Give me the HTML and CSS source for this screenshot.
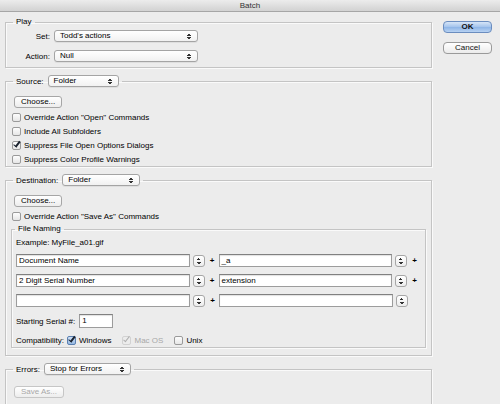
FILE: index.html
```html
<!DOCTYPE html>
<html lang="en">

<head>
    <meta charset="UTF-8">
    <title>Batch</title>
    <link rel="stylesheet" href="styles.css">
</head>

<body>
    <div class="titlebar">Batch</div>

    <div class="dialog">
        <div class="groups">
            <!-- Play -->
            <fieldset class="group play">
                <legend class="text-legend">Play</legend>
                <div class="form-row">
                    <span class="row-label">Set:</span>
                    <div class="select set-select"><span>Todd's actions</span><i class="arrows"></i></div>
                </div>
                <div class="form-row">
                    <span class="row-label">Action:</span>
                    <div class="select set-select"><span>Null</span><i class="arrows"></i></div>
                </div>
            </fieldset>

            <!-- Source -->
            <fieldset class="group source">
                <legend class="select-legend">Source: <div class="select source-select"><span>Folder</span><i class="arrows"></i></div></legend>
                <button class="push">Choose...</button>
                <label class="check"><i class="box"></i>Override Action "Open" Commands</label>
                <label class="check"><i class="box"></i>Include All Subfolders</label>
                <label class="check"><i class="box checked"></i>Suppress File Open Options Dialogs</label>
                <label class="check"><i class="box"></i>Suppress Color Profile Warnings</label>
            </fieldset>

            <!-- Destination -->
            <fieldset class="group destination">
                <legend class="select-legend">Destination: <div class="select dest-select"><span>Folder</span><i class="arrows"></i></div></legend>
                <button class="push">Choose...</button>
                <label class="check"><i class="box"></i>Override Action "Save As" Commands</label>

                <fieldset class="group naming">
                    <legend class="text-legend">File Naming</legend>
                    <div class="example">Example: MyFile_a01.gif</div>
                    <div class="name-row">
                        <div class="field name-field">Document Name</div>
                        <i class="stepper"></i>
                        <span class="plus">+</span>
                        <div class="field name-field">_a</div>
                        <i class="stepper"></i>
                        <span class="plus">+</span>
                    </div>
                    <div class="name-row">
                        <div class="field name-field">2 Digit Serial Number</div>
                        <i class="stepper"></i>
                        <span class="plus">+</span>
                        <div class="field name-field">extension</div>
                        <i class="stepper"></i>
                        <span class="plus">+</span>
                    </div>
                    <div class="name-row">
                        <div class="field name-field"></div>
                        <i class="stepper"></i>
                        <span class="plus">+</span>
                        <div class="field name-field"></div>
                        <i class="stepper"></i>
                    </div>
                    <div class="serial-row">
                        <span>Starting Serial #:</span>
                        <div class="field serial-field">1</div>
                    </div>
                    <div class="compat-row">
                        <span class="compat-label">Compatibility:</span>
                        <label class="check inline"><i class="box checked blue"></i>Windows</label>
                        <label class="check inline disabled"><i class="box checked dim"></i>Mac OS</label>
                        <label class="check inline"><i class="box"></i>Unix</label>
                    </div>
                </fieldset>
            </fieldset>

            <!-- Errors -->
            <fieldset class="group errors">
                <legend class="select-legend">Errors: <div class="select error-select"><span>Stop for Errors</span><i class="arrows"></i></div></legend>
                <button class="push" disabled>Save As...</button>
            </fieldset>
        </div>

        <div class="actions">
            <button class="btn default">OK</button>
            <button class="btn">Cancel</button>
        </div>
    </div>
</body>

</html>
```

FILE: styles.css
```css
body {
    margin: 0;
    width: 500px;
    height: 404px;
    overflow: hidden;
    background-color: #ececec;
    font-family: 'Liberation Sans', Arial, sans-serif;
    font-size: 8px;
    color: #000;
}

.titlebar {
    height: 12px;
    line-height: 12px;
    text-align: center;
    font-size: 8px;
    color: #333;
    background: linear-gradient(#ececec, #d2d2d2);
    border-bottom: 1px solid #a6a6a6;
    box-sizing: border-box;
}

.dialog {
    display: flex;
    align-items: flex-start;
}

.groups {
    width: 427px;
    margin-left: 5px;
    padding-top: 5px;
}

/* group boxes */
.group {
    margin: 0 0 7px 0;
    padding: 0 8px;
    border: 1px solid #c4c4c4;
    box-shadow: 1px 1px 0 #fafafa, inset 1px 1px 0 #fafafa;
    min-inline-size: 0;
}

.text-legend {
    padding: 0 3px;
    margin-left: -1px;
    height: 10px;
    line-height: 10px;
}

.select-legend {
    padding: 0 3px;
    margin-left: -1px;
    display: flex;
    align-items: center;
    gap: 4px;
}

.play {
    padding-top: 3px;
    padding-bottom: 5px;
}

.form-row {
    display: flex;
    align-items: center;
    height: 12px;
    margin-bottom: 8px;
}

.form-row:last-child {
    margin-bottom: 0;
}

.row-label {
    width: 36px;
    text-align: right;
    margin-right: 4px;
}

/* popup menus */
.select {
    height: 12px;
    box-sizing: border-box;
    border: 1px solid #a4a4a4;
    border-radius: 3px;
    background: linear-gradient(#ffffff, #f1f1f1);
    box-shadow: 0 1px 0 rgba(0, 0, 0, 0.06);
    display: flex;
    align-items: center;
    padding-left: 5px;
    line-height: 10px;
}

.select span {
    flex: 1;
}

.arrows {
    width: 4px;
    height: 7px;
    margin-right: 6px;
    background:
        linear-gradient(to bottom right, transparent 50%, #333 50%) 0 0 / 2px 3px no-repeat,
        linear-gradient(to bottom left, transparent 50%, #333 50%) 2px 0 / 2px 3px no-repeat,
        linear-gradient(to top right, transparent 50%, #333 50%) 0 4px / 2px 3px no-repeat,
        linear-gradient(to top left, transparent 50%, #333 50%) 2px 4px / 2px 3px no-repeat;
}

.set-select {
    width: 144px;
}

.source-select {
    width: 71px;
}

.dest-select {
    width: 78px;
}

.error-select {
    width: 87px;
}

/* push buttons */
.push {
    display: block;
    font: inherit;
    color: inherit;
    height: 12px;
    padding: 0 6px;
    line-height: 10px;
    border: 1px solid #a6a6a6;
    border-radius: 3px;
    background: linear-gradient(#ffffff, #ededed);
}

.push:disabled {
    color: #a8a8a8;
    border-color: #c6c6c6;
}

.source .push,
.destination .push {
    margin-top: 9px;
    margin-bottom: 2px;
}

.source {
    padding-bottom: 0;
}

/* checkboxes */
.check {
    display: flex;
    align-items: center;
    height: 14px;
    margin-left: -2px;
}

.box {
    width: 7px;
    height: 7px;
    border: 1px solid #9a9a9a;
    border-radius: 2px;
    background: linear-gradient(#fdfdfd, #e6e6e6);
    margin-right: 3px;
    position: relative;
}

.box.checked::after {
    content: "";
    position: absolute;
    left: 2px;
    top: -2px;
    width: 2px;
    height: 6px;
    border-right: 2px solid #1c2430;
    border-bottom: 1px solid #1c2430;
    transform: rotate(38deg);
}

.box.blue {
    border-color: #5a7fb0;
    background: linear-gradient(#cfe0f4, #96b9e2);
}

.box.dim {
    border-color: #d2d2d2;
    background: #ececec;
}

.box.dim::after {
    border-color: #b0b0b0;
    border-width: 1px;
}

.check.disabled {
    color: #a8a8a8;
}

/* destination */
.destination {
    padding-bottom: 7px;
}

.naming {
    margin: 1px -3px 0;
    padding: 0 4px 0;
}

.example {
    height: 10px;
    line-height: 10px;
    margin: 4px 0 6px;
}

.name-row {
    display: flex;
    align-items: center;
    height: 13px;
    margin-bottom: 7px;
}

.field {
    height: 13px;
    box-sizing: border-box;
    border: 1px solid #9c9c9c;
    border-top-color: #808080;
    background: #fff;
    box-shadow: inset 0 1px 1px rgba(0, 0, 0, 0.12);
    padding-left: 2px;
    line-height: 11px;
}

.name-field {
    width: 174px;
}

.stepper {
    width: 12px;
    height: 12px;
    box-sizing: border-box;
    margin-left: 3px;
    border: 1px solid #a6a6a6;
    border-radius: 3px;
    background:
        linear-gradient(to bottom right, transparent 50%, #333 50%) 3px 2px / 2px 2px no-repeat,
        linear-gradient(to bottom left, transparent 50%, #333 50%) 5px 2px / 2px 2px no-repeat,
        linear-gradient(to top right, transparent 50%, #333 50%) 3px 6px / 2px 2px no-repeat,
        linear-gradient(to top left, transparent 50%, #333 50%) 5px 6px / 2px 2px no-repeat,
        linear-gradient(#ffffff, #ececec);
}

.plus {
    width: 11px;
    text-align: center;
    margin: 0 1px 0 2px;
    font-weight: bold;
}

.serial-row {
    display: flex;
    align-items: center;
    gap: 4px;
    height: 14px;
}

.serial-field {
    width: 34px;
    height: 14px;
}

.compat-row {
    display: flex;
    align-items: center;
    height: 14px;
    margin-top: 5px;
    margin-bottom: 0;
}

.compat-label {
    margin-right: 3px;
}

.check.inline {
    margin-left: 0;
    margin-right: 11px;
}

/* errors */
.errors {
    padding-bottom: 8px;
}

.errors .push {
    margin-top: 11px;
}

/* right side buttons */
.actions {
    margin-left: 11px;
    padding-top: 9px;
    display: flex;
    flex-direction: column;
    gap: 9px;
}

.btn {
    width: 49px;
    height: 12px;
    font: inherit;
    color: #111;
    line-height: 10px;
    padding: 0;
    border: 1px solid #9a9a9a;
    border-radius: 4px;
    background: linear-gradient(#ffffff, #ebebeb);
}

.btn.default {
    border-color: #6b8dbf;
    background: linear-gradient(#d6e5f7, #a3c3ec 50%, #8db4e6 51%, #b7d2f2);
    font-weight: bold;
}
```
